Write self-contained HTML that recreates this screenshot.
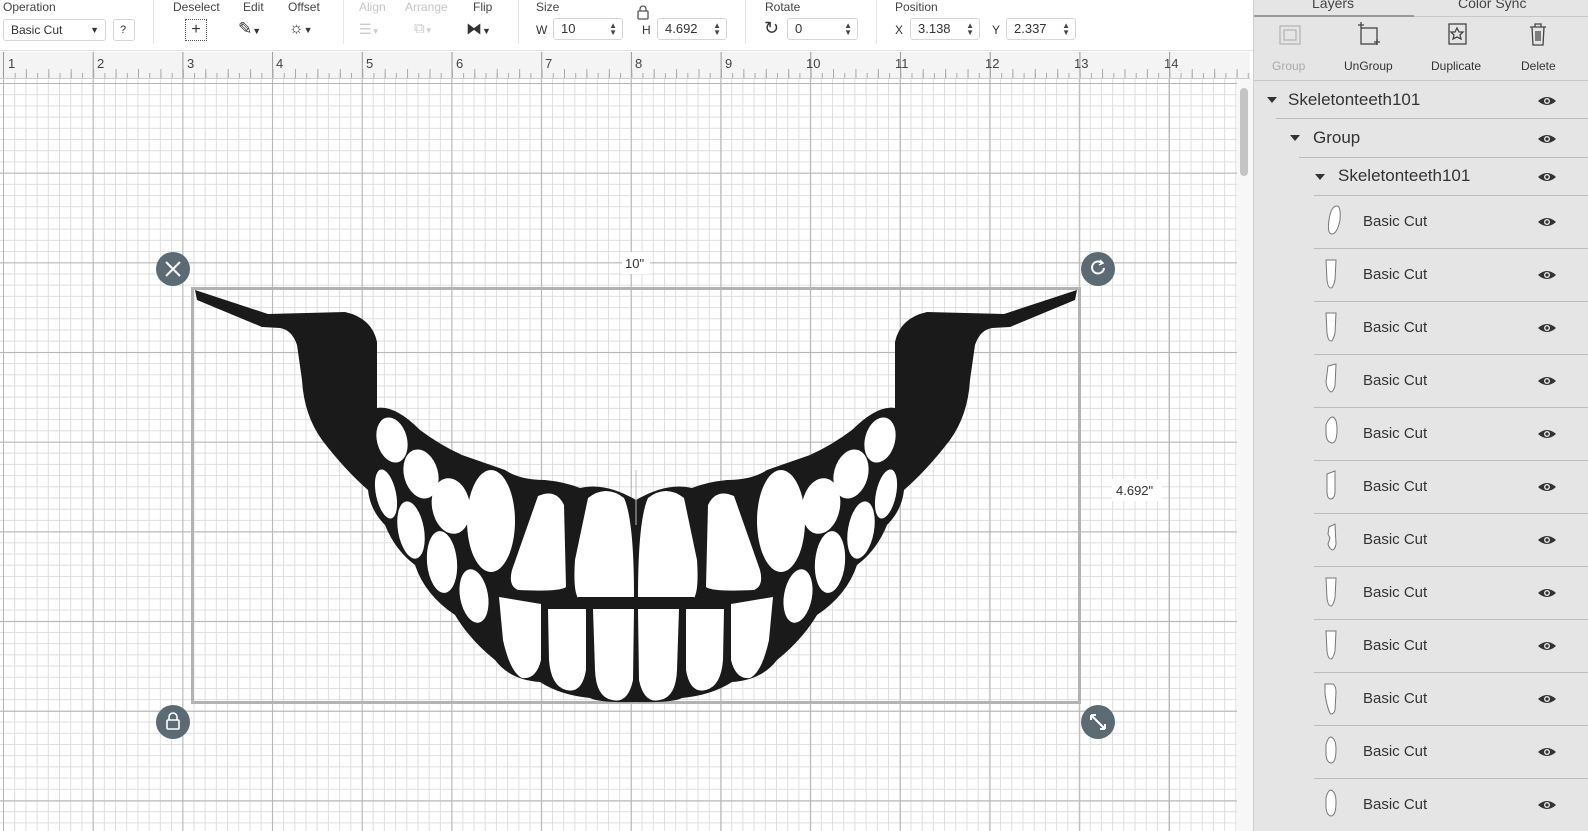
<!DOCTYPE html>
<html><head><meta charset="utf-8"><style>
*{margin:0;padding:0;box-sizing:border-box}
body{width:1588px;height:831px;overflow:hidden;position:relative;font-family:"Liberation Sans",sans-serif;background:#fff;color:#333}
.t{position:absolute;white-space:nowrap}
#top{position:absolute;left:0;top:0;width:1253px;height:51px;background:#fff;border-bottom:1px solid #e2e2e2}
.lbl{position:absolute;top:0;font-size:12px;color:#444}
.box{position:absolute;border:1px solid #d6d6d6;border-radius:3px;background:#fff;font-size:13px;color:#333;height:22px;line-height:20px;padding-left:7px}
.vsep{position:absolute;top:0;width:1px;height:44px;background:#e6e6e6}
.spin{position:absolute;right:5px;top:3px;font-size:8px;line-height:7px;color:#444}
#ruler{position:absolute;left:0;top:52px;width:1250px;height:27px;background:#f4f4f4;border-bottom:1px solid #ccc;overflow:hidden}
#canvas{position:absolute;left:0;top:79px;width:1237px;height:752px;
background-color:#fff;
background-image:linear-gradient(90deg,#b5b5b5 1px,transparent 1px),linear-gradient(#b5b5b5 1px,transparent 1px),linear-gradient(90deg,#dedede 1px,transparent 1px),linear-gradient(#dedede 1px,transparent 1px);
background-size:89.7px 89.7px,89.7px 89.7px,11.21px 11.21px,11.21px 11.21px;
background-position:3px 4px,3px 4px,3px 4px,3px 4px}
#sb{position:absolute;left:1237px;top:79px;width:16px;height:752px;background:#f7f7f7}
#panel{position:absolute;left:1253px;top:0;width:335px;height:831px;background:#e5e5e5;border-left:1px solid #cfcfcf}
.sep{position:absolute;height:1px;background:#bcbcbc;right:0}
.nm{position:absolute;font-size:15px;color:#333}
.tri{position:absolute;width:0;height:0;border-left:5px solid transparent;border-right:5px solid transparent;border-top:6px solid #333}
</style></head><body>
<div id="top">
<div class="lbl" style="left:3px">Operation</div>
<div class="box" style="left:3px;top:19px;width:103px;font-size:12px">Basic Cut<span style="position:absolute;right:6px;font-size:9px">▼</span></div>
<div class="box" style="left:113px;top:19px;width:22px;font-size:11px;padding-left:6px">?</div>
<div class="vsep" style="left:153px"></div>
<div class="lbl" style="left:173px">Deselect</div>
<div style="position:absolute;left:185px;top:19px;width:22px;height:22px;border:1px dotted #555;font-size:16px;text-align:center;line-height:20px">+</div>
<div class="lbl" style="left:243px">Edit</div>
<div class="t" style="left:238px;top:19px;font-size:17px">✎<span style="font-size:9px">▼</span></div>
<div class="lbl" style="left:288px">Offset</div>
<div class="t" style="left:289px;top:20px;font-size:16px">☼<span style="font-size:9px">▼</span></div>
<div class="vsep" style="left:343px"></div>
<div class="lbl" style="left:359px;color:#c5c5c5">Align</div>
<div class="t" style="left:359px;top:21px;font-size:14px;color:#ccc">☰<span style="font-size:8px">▼</span></div>
<div class="lbl" style="left:405px;color:#c5c5c5">Arrange</div>
<div class="t" style="left:414px;top:20px;font-size:15px;color:#ccc">⧉<span style="font-size:8px">▼</span></div>
<div class="lbl" style="left:473px">Flip</div>
<div class="t" style="left:466px;top:19px;font-size:16px">⧓<span style="font-size:9px">▼</span></div>
<div class="vsep" style="left:518px"></div>
<div class="lbl" style="left:536px">Size</div>
<div class="t" style="left:536px;top:23px;font-size:12px">W</div>
<div class="box" style="left:553px;top:18px;width:70px">10<span class="spin">▲<br>▼</span></div>
<svg width="14" height="16" style="position:absolute;left:636px;top:4px"><rect x="2" y="7" width="10" height="8" rx="1" fill="none" stroke="#555" stroke-width="1.3"/><path d="M4 7V5a3 3 0 0 1 6 0v2" fill="none" stroke="#555" stroke-width="1.3"/></svg>
<div class="t" style="left:642px;top:23px;font-size:12px">H</div>
<div class="box" style="left:657px;top:18px;width:70px">4.692<span class="spin">▲<br>▼</span></div>
<div class="vsep" style="left:745px"></div>
<div class="lbl" style="left:765px">Rotate</div>
<div class="t" style="left:764px;top:18px;font-size:18px">↻</div>
<div class="box" style="left:787px;top:18px;width:71px">0<span class="spin">▲<br>▼</span></div>
<div class="vsep" style="left:876px"></div>
<div class="lbl" style="left:895px">Position</div>
<div class="t" style="left:895px;top:23px;font-size:12px">X</div>
<div class="box" style="left:910px;top:18px;width:70px">3.138<span class="spin">▲<br>▼</span></div>
<div class="t" style="left:992px;top:23px;font-size:12px">Y</div>
<div class="box" style="left:1006px;top:18px;width:70px">2.337<span class="spin">▲<br>▼</span></div>
</div>

<div id="ruler">
<svg width="1250" height="27" style="position:absolute;left:0;top:0">
<g stroke="#999" stroke-width="1">
<path d="M3.5 0V27M93.2 0V27M182.9 0V27M272.6 0V27M362.3 0V27M452 0V27M541.7 0V27M631.4 0V27M721.1 0V27M810.8 0V27M900.5 0V27M990.2 0V27M1079.9 0V27M1169.6 0V27"/>
</g>
<g font-size="13" fill="#444" font-family="Liberation Sans">
<text x="8" y="16">1</text><text x="97" y="16">2</text><text x="187" y="16">3</text><text x="276" y="16">4</text><text x="366" y="16">5</text><text x="456" y="16">6</text><text x="545" y="16">7</text><text x="635" y="16">8</text><text x="725" y="16">9</text><text x="806" y="16">10</text><text x="895" y="16">11</text><text x="985" y="16">12</text><text x="1074" y="16">13</text><text x="1164" y="16">14</text>
</g>
<path stroke="#aaa" stroke-dasharray="1 10.21" stroke-width="6" d="M14.7 24H1250" />
<path stroke="#aaa" stroke-dasharray="1 21.42" stroke-width="10" d="M25.9 22H1250" />
</svg>
</div>

<div id="canvas"></div>
<div id="sb"><div style="position:absolute;left:3px;top:9px;width:8px;height:88px;border-radius:4px;background:#c4c4c4"></div></div>

<svg width="1237" height="831" style="position:absolute;left:0;top:0" viewBox="0 0 1237 831">
<rect x="192.5" y="288.5" width="887" height="414" fill="none" stroke="#b3b3b3" stroke-width="3"/>
<g id="L">
<path fill="#1a1a1a" d="M195 290 L268 314 L345 312 Q372 318 377 342 L377 408 Q395 405 420 430 Q440 445 462 455 Q485 463 505 470 Q520 480 545 480 Q565 482 580 488 Q605 482 636 500 L636 702 Q600 703 590 698 Q560 695 540 682 Q510 680 495 660 Q470 640 455 615 Q425 595 415 565 Q395 550 385 525 Q370 510 368 490 Q345 470 322 440 Q304 415 302 380 L297 345 Q292 330 280 328 L262 327 L197 300 Z"/>
<g fill="#fff">
<ellipse cx="392" cy="440" rx="15" ry="23" transform="rotate(-15 392 440)"/>
<ellipse cx="421" cy="474" rx="17" ry="25" transform="rotate(-15 421 474)"/>
<ellipse cx="451" cy="506" rx="19" ry="28" transform="rotate(-10 451 506)"/>
<ellipse cx="491" cy="521" rx="24" ry="51"/>
<path d="M538 496 Q556 488 564 505 L566 587 Q560 592 518 590 Q508 586 512 570 Z"/>
<path d="M588 498 Q606 484 624 498 Q634 520 634 597 L578 598 Q573 590 575 560 Z"/>
<ellipse cx="386" cy="494" rx="10" ry="25" transform="rotate(-12 386 494)"/>
<ellipse cx="411" cy="530" rx="13" ry="29" transform="rotate(-10 411 530)"/>
<ellipse cx="442" cy="562" rx="15" ry="31" transform="rotate(-5 442 562)"/>
<ellipse cx="474" cy="596" rx="14" ry="27" transform="rotate(-10 474 596)"/>
<path d="M499 597 L541 604 L541 660 Q536 680 522 678 Q510 672 503 640 Z"/>
<path d="M548 609 L586 609 L586 670 Q582 694 566 690 Q551 686 549 660 Z"/>
<path d="M593 609 L634 609 L633 680 Q628 704 612 700 Q596 697 595 670 Z"/>
</g>
</g>
<use href="#L" transform="translate(1272 0) scale(-1 1)"/>
<path fill="#1a1a1a" d="M634 500 H638 V700 H634 Z"/>
<path fill="#1a1a1a" d="M578 597h116v12h-116z"/>
<path stroke="#bbb" d="M636 470V525"/>
<rect x="622" y="252" width="28" height="22" fill="#fff"/>
<text x="625" y="268" font-size="13" fill="#333" font-family="Liberation Sans">10"</text>
<rect x="1112" y="479" width="50" height="22" fill="#fff"/>
<text x="1116" y="495" font-size="13" fill="#333" font-family="Liberation Sans">4.692"</text>
<g>
<circle cx="173" cy="269" r="17" fill="#5b6a73"/><path d="M166 262l14 14M180 262l-14 14" stroke="#fff" stroke-width="2"/>
<circle cx="1098" cy="269" r="17" fill="#5b6a73"/><path d="M1104 268a6 6 0 1 1-2-5" fill="none" stroke="#fff" stroke-width="2"/><path d="M1100 260l3 3-4 2" fill="none" stroke="#fff" stroke-width="1.5"/>
<circle cx="173" cy="722" r="17" fill="#5b6a73"/><rect x="167" y="720" width="12" height="9" rx="1" fill="none" stroke="#fff" stroke-width="1.6"/><path d="M169 720v-3a4 4 0 0 1 8 0v3" fill="none" stroke="#fff" stroke-width="1.6"/>
<circle cx="1098" cy="722" r="17" fill="#5b6a73"/><path d="M1091 715l14 14M1091 715h5M1091 715v5M1105 729h-5M1105 729v-5" stroke="#fff" stroke-width="2" fill="none"/>
</g>
</svg>

<div id="panel">
<div class="t" style="left:58px;top:-5px;font-size:14px;color:#444">Layers</div>
<div class="t" style="left:204px;top:-5px;font-size:14px;color:#444">Color Sync</div>
<div style="position:absolute;left:0;top:15px;width:160px;height:2px;background:#999"></div>
<div style="position:absolute;left:160px;top:16px;width:175px;height:1px;background:#c8c8c8"></div>
<svg width="335" height="50" style="position:absolute;left:0;top:18px">
<g fill="none" stroke-width="1.3">
<rect x="26" y="8" width="20" height="18" stroke="#b5b5b5"/><rect x="30" y="12" width="12" height="10" stroke="#b5b5b5"/>
<rect x="107" y="10" width="16" height="16" stroke="#444"/><path d="M104 7h6M107 4v6M120 24h6M123 21v6" stroke="#444"/>
<rect x="195" y="6" width="17" height="20" stroke="#444"/><path d="M203 10l2 4 4 0-3 3 1 4-4-2-4 2 1-4-3-3 4 0z" stroke="#444"/>
<path d="M276 9h16M281 9v-3h6v3M278 9l1 18h10l1-18M282 13v10M284 13v10M286 13v10" stroke="#444"/>
</g></svg>
<div class="t" style="left:18px;top:59px;font-size:12px;color:#aaa">Group</div>
<div class="t" style="left:90px;top:59px;font-size:12px;color:#333">UnGroup</div>
<div class="t" style="left:177px;top:59px;font-size:12px;color:#333">Duplicate</div>
<div class="t" style="left:267px;top:59px;font-size:12px;color:#333">Delete</div>
<div style="position:absolute;left:0;top:80px;width:335px;height:1px;background:#c8c8c8"></div>

<div class="tri" style="left:13px;top:97px"></div><div class="nm" style="left:34px;top:90px;font-size:17px">Skeletonteeth101</div>
<div class="sep" style="left:22px;top:118px"></div>
<div class="tri" style="left:36px;top:135px"></div><div class="nm" style="left:59px;top:128px;font-size:17px">Group</div>
<div class="sep" style="left:45px;top:157px"></div>
<div class="tri" style="left:61px;top:174px"></div><div class="nm" style="left:84px;top:166px;font-size:17px">Skeletonteeth101</div>
<div class="sep" style="left:60px;top:195px"></div>
<svg width="335" height="831" style="position:absolute;left:0;top:0">
<defs><g id="eye"><path d="M-9 0Q0-8 9 0Q0 8-9 0Z" fill="#333"/><circle r="3" fill="#e5e5e5"/><circle r="1.6" fill="#333"/></g></defs>
<use href="#eye" x="293" y="101"/><use href="#eye" x="293" y="139"/><use href="#eye" x="293" y="177"/>
<g stroke="#bcbcbc"><path d="M60 248.5H335M60 301.5H335M60 354.5H335M60 407.5H335M60 460.5H335M60 513.5H335M60 566.5H335M60 619.5H335M60 672.5H335M60 725.5H335M60 778.5H335"/></g>
<g fill="#fff" stroke="#777" stroke-width="1">
<path d="M75 220q2-14 8-14q4 0 3 14q-3 14-8 14q-5 0-3-14z"/>
<path d="M72 260h10l-1 20q-2 8-4 8q-3 0-4-8z"/>
<path d="M72 313h10l-1 20q-2 8-4 8q-3 0-4-8z"/>
<path d="M74 366l8-2l-1 22q-2 6-4 6q-4-2-5-10z"/>
<path d="M72 425q3-8 7-8q4 2 4 12q0 14-5 14q-6-1-6-10z"/>
<path d="M73 474l8-3l0 22q-1 6-4 6q-4 0-4-8z"/>
<path d="M75 527l6-3l1 20q-1 6-4 6q-3-2-4-6l2-6l-2-4z"/>
<path d="M72 578h10l-1 20q-2 8-4 8q-3 0-4-8z"/>
<path d="M72 631h10l-1 20q-2 8-4 8q-3 0-4-8z"/>
<path d="M71 684l8 0q3 2 3 8l-1 18q-1 4-4 4q-3-2-6-20z"/>
<path d="M72 745q2-8 5-8q5 2 5 12q0 14-5 14q-5-1-5-10z"/>
<path d="M72 798q2-8 5-8q5 2 5 12q0 14-5 14q-5-1-5-10z"/>
</g>
<g font-family="Liberation Sans" font-size="15" fill="#333">
<text x="109" y="226">Basic Cut</text><text x="109" y="279">Basic Cut</text><text x="109" y="332">Basic Cut</text><text x="109" y="385">Basic Cut</text><text x="109" y="438">Basic Cut</text><text x="109" y="491">Basic Cut</text><text x="109" y="544">Basic Cut</text><text x="109" y="597">Basic Cut</text><text x="109" y="650">Basic Cut</text><text x="109" y="703">Basic Cut</text><text x="109" y="756">Basic Cut</text><text x="109" y="809">Basic Cut</text>
</g>
<use href="#eye" x="293" y="222"/><use href="#eye" x="293" y="275"/><use href="#eye" x="293" y="328"/><use href="#eye" x="293" y="381"/><use href="#eye" x="293" y="434"/><use href="#eye" x="293" y="487"/><use href="#eye" x="293" y="540"/><use href="#eye" x="293" y="593"/><use href="#eye" x="293" y="646"/><use href="#eye" x="293" y="699"/><use href="#eye" x="293" y="752"/><use href="#eye" x="293" y="805"/>
</svg>
</div>
</body></html>
